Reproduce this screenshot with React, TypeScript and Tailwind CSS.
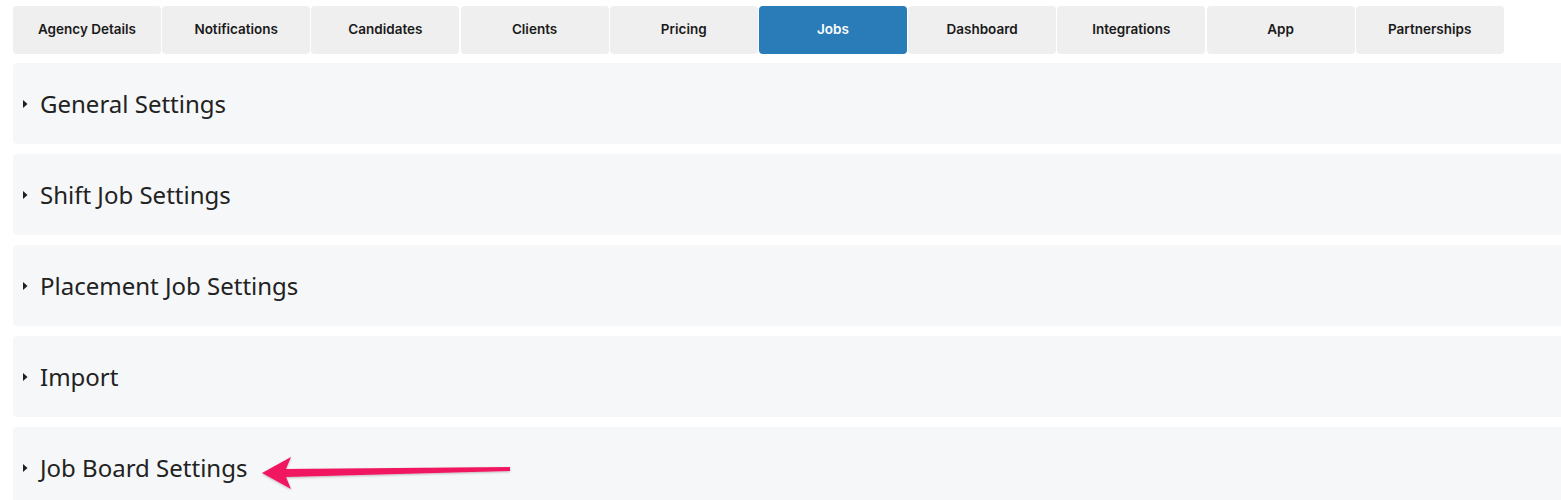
const tabs = [
  'Agency Details',
  'Notifications',
  'Candidates',
  'Clients',
  'Pricing',
  'Jobs',
  'Dashboard',
  'Integrations',
  'App',
  'Partnerships',
];

const sections = [
  'General Settings',
  'Shift Job Settings',
  'Placement Job Settings',
  'Import',
  'Job Board Settings',
];

function Caret() {
  return (
    <svg width="6" height="10" viewBox="0 0 6 10" aria-hidden="true" className="shrink-0">
      <path d="M1 1 L5.5 5 L1 9 Z" fill="#1f1f1f" />
    </svg>
  );
}

function PointerArrow() {
  return (
    <svg
      className="pointer-events-none absolute left-[258px] top-[454px]"
      width="260"
      height="40"
      viewBox="0 0 260 40"
      aria-hidden="true"
    >
      <defs>
        <filter id="arrow-shadow" x="-10%" y="-50%" width="120%" height="200%">
          <feDropShadow dx="0" dy="1" stdDeviation="1" floodColor="#000" floodOpacity="0.25" />
        </filter>
      </defs>
      <g filter="url(#arrow-shadow)">
        <path
          d="M4 19 L33 3 L28 15 L252 13 L252 17 L28 23 L33 35 Z"
          fill="#f0175f"
        />
      </g>
    </svg>
  );
}

export default function App() {
  return (
    <div className="relative min-h-[500px] overflow-hidden bg-white pl-[13px] pt-[6px]">
      <div className="flex gap-[1.2px]">
        {tabs.map((tab) => (
          <div
            key={tab}
            className={
              tab === 'Jobs'
                ? 'flex h-[48px] w-[148px] items-center justify-center rounded-[4px] bg-[#2a7cb8] pb-[1px] text-[13.5px] font-semibold text-white'
                : 'flex h-[48px] w-[148px] items-center justify-center rounded-[4px] bg-[#efefef] pb-[1px] text-[13.5px] font-semibold text-[#1a1a1a]'
            }
            style={{ fontFamily: 'Inter, "Open Sans", sans-serif' }}
          >
            {tab}
          </div>
        ))}
      </div>

      <div className="mt-[9px] flex w-[1560px] flex-col gap-[10px]">
        {sections.map((title) => (
          <div
            key={title}
            className="flex h-[81px] items-center gap-[12px] rounded-[4px] bg-[#f6f7f9] pl-[9px]"
          >
            <Caret />
            <span
              className="text-[24px] leading-none text-[#222222]"
              style={{ fontFamily: '"Noto Sans", "Open Sans", sans-serif' }}
            >
              {title}
            </span>
          </div>
        ))}
      </div>

      <PointerArrow />
    </div>
  );
}
